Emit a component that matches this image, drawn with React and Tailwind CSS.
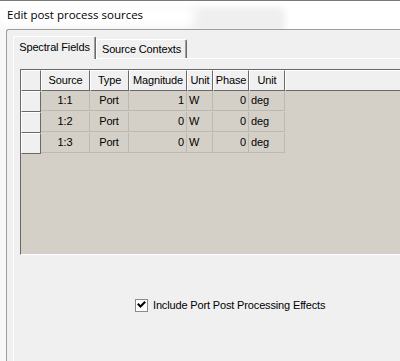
import React from 'react';

const cols = [
    { label: 'Source', w: 'w-[49px]', align: 'justify-center' },
    { label: 'Type', w: 'w-[39px]', align: 'justify-center' },
    { label: 'Magnitude', w: 'w-[58px]', align: 'justify-end pr-[2px]' },
    { label: 'Unit', w: 'w-[26px]', align: 'justify-start pl-[2px]' },
    { label: 'Phase', w: 'w-[36px]', align: 'justify-end pr-[2px]' },
    { label: 'Unit', w: 'w-[36px]', align: 'justify-start pl-[2px]' },
];

const rows = [
    ['1:1', 'Port', '1', 'W', '0', 'deg'],
    ['1:2', 'Port', '0', 'W', '0', 'deg'],
    ['1:3', 'Port', '0', 'W', '0', 'deg'],
];

function HeaderCell({ className = '', children }) {
    return (
        <div className={`h-[21px] shrink-0 flex items-center justify-center bg-[#f0f0f0] border-t border-l border-t-white border-l-white border-r border-b border-r-[#696969] border-b-[#696969] ${className}`}>
            {children}
        </div>
    );
}

export default function App() {
    return (
        <div className="w-[400px] h-[361px] overflow-hidden flex flex-col bg-[#f7f7f7] text-black text-[11px] tracking-[-0.15px] font-['Liberation_Sans',Arial,sans-serif]">
            {/* title bar */}
            <div className="relative h-[29px] shrink-0 border-t border-[#7a7a7a] bg-white overflow-hidden">
                <div className="absolute left-[-10px] top-[6px] w-[295px] h-[26px] rounded-[6px] bg-[#efefef] blur-[3px]" />
                <div className="absolute left-[-10px] top-[2px] w-[205px] h-[26px] rounded-[10px] bg-white blur-[6px]" />
                <div className="relative pl-[7px] pt-[5px] text-[11.5px] tracking-normal leading-[17px] font-['Open_Sans',sans-serif]">
                    Edit post process sources
                </div>
            </div>

            <div className="flex flex-1">
                <div className="w-[6px] shrink-0" />
                <div className="flex-1 flex flex-col pl-[6px] pt-[6px] bg-[#f0f0f0] border-l border-t border-[#9d9d9d] rounded-tl-[3px]">
                    {/* tabs */}
                    <div className="flex items-end h-[22px]">
                        <div className="relative z-10 -mb-px w-[83px] h-[23px] flex items-center justify-center pb-[1px] bg-[#f0f0f0] border-l border-t border-white border-r border-r-[#696969] rounded-t-[2px] shadow-[inset_-1px_0_0_#a0a0a0]">
                            Spectral Fields
                        </div>
                        <div className="w-[91px] h-[19px] flex items-center justify-center bg-[#f0f0f0] border-l border-t border-white border-r border-r-[#696969] rounded-t-[2px] shadow-[inset_-1px_0_0_#a0a0a0]">
                            Source Contexts
                        </div>
                    </div>

                    {/* tab page */}
                    <div className="flex-1 flex flex-col pl-[6px] pt-[10px] border-l border-t border-white">
                        <div className="h-[186px] bg-[#d4d0c8] border-l border-t border-[#696969] border-b border-b-white">
                            <div className="flex">
                                <HeaderCell className="w-[20px]" />
                                {cols.map((c, i) => (
                                    <HeaderCell key={i} className={c.w}>{c.label}</HeaderCell>
                                ))}
                                <HeaderCell className="flex-1 border-r-0" />
                            </div>
                            {rows.map((r, ri) => (
                                <div key={ri} className="flex">
                                    <HeaderCell className="w-[20px] h-[20px]" />
                                    {r.map((v, ci) => (
                                        <div
                                            key={ci}
                                            className={`h-[20px] shrink-0 flex items-center border-r border-b border-[#bcb9b2] ${cols[ci].w} ${cols[ci].align}`}
                                        >
                                            {v}
                                        </div>
                                    ))}
                                </div>
                            ))}
                        </div>

                        <div className="mt-[42px] ml-[115px] flex items-center gap-[5px]">
                            <div className="w-[13px] h-[13px] bg-white border border-[#8a8a8a] flex items-center justify-center">
                                <svg width="11" height="11" viewBox="0 0 11 11">
                                    <path d="M2.5 4.5 L4.5 6.5 L8.5 2.5" stroke="#000" strokeWidth="2" fill="none" strokeLinecap="square" />
                                </svg>
                            </div>
                            <span>Include Port Post Processing Effects</span>
                        </div>
                    </div>
                </div>
            </div>
        </div>
    );
}
